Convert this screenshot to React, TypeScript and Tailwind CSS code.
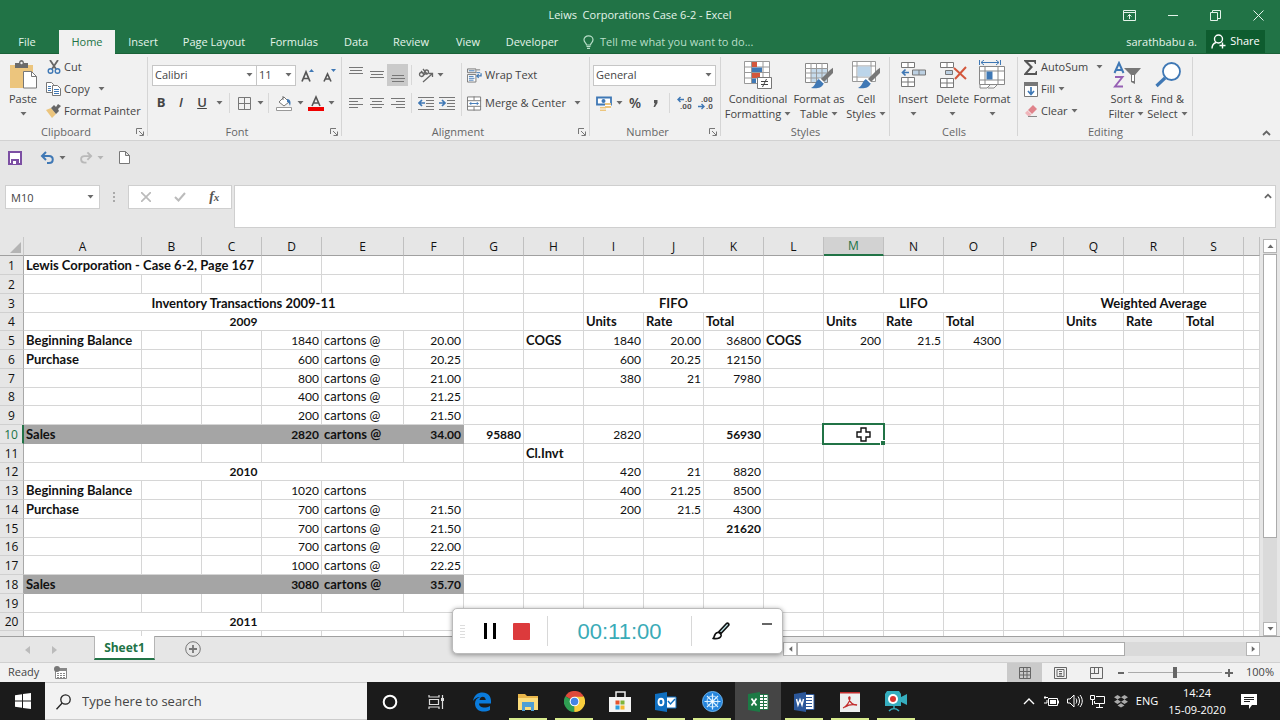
import type { ReactNode } from 'react';

type Cell = { t: string; b?: boolean; a?: 'l' | 'r' | 'c'; span?: number };

const columns = ['A', 'B', 'C', 'D', 'E', 'F', 'G', 'H', 'I', 'J', 'K', 'L', 'M', 'N', 'O', 'P', 'Q', 'R', 'S', ''];

const n = (t: string, b = false): Cell => ({ t, b, a: 'r' });
const h = (t: string): Cell => ({ t, b: true, a: 'l' });
const x = (t: string): Cell => ({ t, a: 'l' });
const m = (t: string, span: number): Cell => ({ t, b: true, a: 'c', span });

const sheet: Record<number, Record<string, Cell>> = {
  1: { A: { t: 'Lewis Corporation - Case 6-2, Page 167', b: true, a: 'l', span: 3 } },
  3: { A: m('Inventory Transactions 2009-11', 6), I: m('FIFO', 3), M: m('LIFO', 3), Q: m('Weighted Average', 3) },
  4: {
    A: m('2009', 6), I: h('Units'), J: h('Rate'), K: h('Total'), M: h('Units'), N: h('Rate'), O: h('Total'),
    Q: h('Units'), R: h('Rate'), S: h('Total'),
  },
  5: {
    A: h('Beginning Balance'), D: n('1840'), E: x('cartons @'), F: n('20.00'), H: h('COGS'), I: n('1840'), J: n('20.00'),
    K: n('36800'), L: h('COGS'), M: n('200'), N: n('21.5'), O: n('4300'),
  },
  6: { A: h('Purchase'), D: n('600'), E: x('cartons @'), F: n('20.25'), I: n('600'), J: n('20.25'), K: n('12150') },
  7: { D: n('800'), E: x('cartons @'), F: n('21.00'), I: n('380'), J: n('21'), K: n('7980') },
  8: { D: n('400'), E: x('cartons @'), F: n('21.25') },
  9: { D: n('200'), E: x('cartons @'), F: n('21.50') },
  10: {
    A: h('Sales'), D: n('2820', true), E: h('cartons @'), F: n('34.00', true), G: n('95880', true), I: n('2820'),
    K: n('56930', true),
  },
  11: { H: h('Cl.Invt') },
  12: { A: m('2010', 6), I: n('420'), J: n('21'), K: n('8820') },
  13: { A: h('Beginning Balance'), D: n('1020'), E: x('cartons'), I: n('400'), J: n('21.25'), K: n('8500') },
  14: { A: h('Purchase'), D: n('700'), E: x('cartons @'), F: n('21.50'), I: n('200'), J: n('21.5'), K: n('4300') },
  15: { D: n('700'), E: x('cartons @'), F: n('21.50'), K: n('21620', true) },
  16: { D: n('700'), E: x('cartons @'), F: n('22.00') },
  17: { D: n('1000'), E: x('cartons @'), F: n('22.25') },
  18: { A: h('Sales'), D: n('3080', true), E: h('cartons @'), F: n('35.70', true) },
  20: { A: m('2011', 6) },
};

const align = { l: 'text-left', r: 'text-right', c: 'text-center' };

function Caret({ light = false }: { light?: boolean }) {
  return (
    <svg width="7" height="4" viewBox="0 0 7 4" className={light ? 'shrink-0 fill-[#b5b5b5]' : 'shrink-0 fill-[#6a6a6a]'}>
      <path d="M.5 0h6l-3 3.6z" />
    </svg>
  );
}

function CaretButton({ label, className = 'w-[9px]' }: { label: string; className?: string }) {
  return (
    <button aria-label={label} className={`flex h-[22px] shrink-0 items-center justify-center ${className}`}>
      <Caret />
    </button>
  );
}

function Tool({ label, className = 'w-[21px]', children }: { label: string; className?: string; children: ReactNode }) {
  return (
    <button aria-label={label} title={label} className={`flex h-[22px] shrink-0 items-center justify-center ${className}`}>
      {children}
    </button>
  );
}

function SmallCommand({ label, icon, caret, gap = 'gap-1' }: { label: string; icon: ReactNode; caret?: boolean; gap?: string }) {
  return (
    <button className="flex h-[22px] items-center gap-[3px] whitespace-nowrap">
      <span className="flex w-[15px] shrink-0 justify-center">{icon}</span>
      <span className={`flex items-center ${gap}`}>
        {label}
        {caret && <Caret />}
      </span>
    </button>
  );
}

function BigCommand({ lines, icon, className }: { lines: [string, string?]; icon: ReactNode; className: string }) {
  return (
    <button className={`flex shrink-0 flex-col items-center pt-[5px] leading-[15px] whitespace-nowrap ${className}`}>
      <span className="flex h-8 items-center">{icon}</span>
      <span>{lines[0]}</span>
      <span className="flex h-[15px] items-center gap-[3px]">
        {lines[1]}
        <Caret />
      </span>
    </button>
  );
}

function Divider({ className }: { className: string }) {
  return <span className={`w-px shrink-0 bg-[#d8d8d8] ${className}`} />;
}

function Group({ name, className, launcher, children }: { name: string; className: string; launcher?: boolean; children: ReactNode }) {
  return (
    <section aria-label={name} className={`relative flex shrink-0 flex-col ${className}`}>
      <div className="flex h-[71px]">{children}</div>
      <div className={`text-center leading-[14px] text-[#666] ${launcher ? 'pr-4' : ''}`}>{name}</div>
      {launcher && (
        <button aria-label={`${name} settings`} className="absolute right-1 bottom-1">
          <svg width="8" height="8" viewBox="0 0 8 8" fill="none" stroke="#777">
            <path d="M.5 6V.5H6M3 3l4 4M7.5 3.500V7.500H3.500" />
          </svg>
        </button>
      )}
      <span className="absolute top-[3px] right-0 h-[79px] w-px bg-[#d5d5d5]" />
    </section>
  );
}

function Lines({ rows, className = '' }: { rows: [number, number, number][]; className?: string }) {
  return (
    <svg width="14" height="18" viewBox="0 0 14 18" stroke="#777" className={className}>
      {rows.map(([y, x1, x2]) => (
        <path key={y} d={`M${x1} ${y}.5H${x2}`} />
      ))}
    </svg>
  );
}

const PasteIcon = (
  <svg width="28" height="30" viewBox="0 0 28 30">
    <path d="M1 5h23v23H1z" fill="#ecc57d" />
    <path d="M6 3h4c0-4 5-4 5 0h4v5H6z" fill="#6b6b6b" />
    <circle cx="12.500" cy="3" r="1.200" fill="#f1f1f1" />
    <path d="M14.500 11.500h8l5 5V28h-13z" fill="#fff" stroke="#777" />
    <path d="M22.500 11.500v5h5" fill="none" stroke="#777" />
  </svg>
);
const CutIcon = (
  <svg width="14" height="14" viewBox="0 0 14 14" fill="none">
    <path d="M3 0l6 9M11 0L5 9" stroke="#666" strokeWidth="1.800" />
    <circle cx="3.500" cy="11" r="2.300" stroke="#3f78b5" strokeWidth="1.400" />
    <circle cx="10.500" cy="11" r="2.300" stroke="#3f78b5" strokeWidth="1.400" />
  </svg>
);
const CopyIcon = (
  <svg width="15" height="14" viewBox="0 0 15 14" fill="#fff" stroke="#777">
    <path d="M.5.5h5l2 2v8h-7z" />
    <path d="M2 4.500h3M2 6.500h3M2 8.500h3" stroke="#3f78b5" />
    <path d="M6.500 3.500h5l3 3v7h-8z" />
    <path d="M8 7.500h5M8 9.500h5M8 11.500h5" stroke="#3f78b5" />
  </svg>
);
const PainterIcon = (
  <svg width="15" height="14" viewBox="0 0 15 14">
    <path d="M0 6l5-2 5 6-4 4z" fill="#ecc57d" />
    <path d="M5 4l3-3 2 2 2-3 3 2-3 3 1 2-3 3z" fill="#666" />
  </svg>
);
const GrowA = ({ up }: { up: boolean }) => (
  <svg width="13" height="15" viewBox="0 0 13 15">
    {up ? (
      <path d="M1 13.500L5 4l4 9.500M2.500 10.500h5" fill="none" stroke="#555" strokeWidth="1.700" />
    ) : (
      <path d="M1 13.500L4.500 6 8 13.500M2.500 11h4" fill="none" stroke="#555" strokeWidth="1.600" />
    )}
    <path d={up ? 'M8 4h5l-2.500-3z' : 'M8 1h5l-2.500 3z'} fill="#3f78b5" />
  </svg>
);
const BordersIcon = (
  <svg width="13" height="13" viewBox="0 0 13 13" fill="none" stroke="#777">
    <path d="M.5.5h12v12H.5zM6.500 0v13M0 6.500h13" />
  </svg>
);
const BucketIcon = (
  <svg width="16" height="16" viewBox="0 0 16 16">
    <path d="M3 7l5-5 5 5-5 4z" fill="#fff" stroke="#777" />
    <path d="M7 5V1" stroke="#777" />
    <path d="M11 4c4 0 4 4 3 7-1-2-1-4-3-4z" fill="#3f78b5" />
    <path d="M.5 12.500h15v3H.5z" fill="#fff" stroke="#999" />
  </svg>
);
const FontColorIcon = (
  <svg width="16" height="16" viewBox="0 0 16 16">
    <path d="M4 11L8 2l4 9M5.500 8h5" fill="none" stroke="#555" strokeWidth="1.600" />
    <path d="M0 12h16v4H0z" fill="#f00000" />
  </svg>
);
const OrientIcon = (
  <svg width="16" height="15" viewBox="0 0 16 15" fill="none" stroke="#666" strokeWidth="1.300">
    <circle cx="3.500" cy="6.500" r="2" />
    <path d="M3 3l4 4M5 1l4 5" />
    <circle cx="8.500" cy="4" r="2" />
    <path d="M5 14l9-8M11 5.500h3.500V9" />
  </svg>
);
const IndentIcon = ({ out }: { out: boolean }) => (
  <svg width="16" height="13" viewBox="0 0 16 13" fill="none" stroke="#777">
    <path d="M0 .5h16M8 3.500h8M8 6.500h8M8 9.500h8M0 12.500h16" />
    <path d={out ? 'M7 6H1M4 3L1 6l3 3' : 'M0 6h6M3 3l3 3-3 3'} stroke="#3f78b5" strokeWidth="1.700" />
  </svg>
);
const WrapIcon = (
  <svg width="16" height="16" viewBox="0 0 16 16" fill="none" stroke="#777">
    <path d="M.5 1.500h9v4h-9zM10 2.500h4" />
    <path d="M2 3.500h6M10 5.500h4" stroke="#3f78b5" />
    <path d="M.5 7.500h9v8h-9z" fill="#fff" />
    <path d="M2 9.500h5M2 11.500h6M2 13.500h5" stroke="#3f78b5" />
    <path d="M15 6v3h-4M12.500 7L10.500 9l2 2" stroke="#3f78b5" strokeWidth="1.300" />
  </svg>
);
const MergeIcon = (
  <svg width="16" height="15" viewBox="0 0 16 15" fill="#fff" stroke="#777">
    <path d="M.5.5h14v14H.5zM7.500 0v4M7.500 11v4M0 4.500h15M0 10.500h15" />
    <path d="M3 7.500h9M4.500 6L3 7.500 4.500 9M10.500 6L12 7.500 10.500 9" fill="none" stroke="#3f78b5" />
  </svg>
);
const MoneyIcon = (
  <svg width="16" height="15" viewBox="0 0 16 15">
    <path d="M1 1.500h14v7H1z" fill="#fff" stroke="#3f78b5" strokeWidth="1.800" />
    <circle cx="7.500" cy="5" r="2" fill="#3f78b5" />
    <path d="M9 7h6v5H9zM4 11h6v4H4z" fill="#ecc57d" />
    <path d="M9 9.500h6M4 13h11" stroke="#fff" />
  </svg>
);
const DecimalIcon = ({ more }: { more: boolean }) => (
  <svg width="15" height="14" viewBox="0 0 15 14" fontFamily="Roboto, sans-serif" fontSize="8" fontWeight="700" fill="#555">
    <text x={more ? 8 : 3} y="6">{more ? '.0' : '.00'}</text>
    <text x={more ? 3 : 8} y="13">{more ? '.00' : '.0'}</text>
    <path d={more ? 'M7 3.500H1M3.500 1L1 3.500 3.500 6' : 'M0 10.500h6M3.500 8L6 10.500 3.500 13'} fill="none" stroke="#3f78b5" strokeWidth="1.400" />
  </svg>
);
const ConditionalIcon = (
  <svg width="28" height="28" viewBox="0 0 28 28">
    <path d="M.5.5h25v22H.5zM7.500 0v23M19 0v23M0 6h26M0 11.500h26M0 17h26" fill="#fff" stroke="#999" />
    <path d="M8 1h5v5H8zM8 12h8v5H8z" fill="#d3573c" />
    <path d="M8 6.500h10V11H8zM8 17.500h4V22H8z" fill="#3f78b5" />
    <path d="M13.500 16.500h14v11h-14z" fill="#fff" stroke="#777" />
    <path d="M17 20.500h7M17 23.500h7M22.500 18l-4 8" stroke="#444" fill="none" />
  </svg>
);
const Brush = (
  <>
    <path d="M15 19l10-10 4-3-1 6-9 9z" fill="#777" />
    <path d="M14 18l5 4c-2 5-7 6-13 5 5-2 4-7 8-9z" fill="#3f78b5" />
    <path d="M14.500 17.500l4.500 4.500" stroke="#fff" strokeWidth="1.500" />
  </>
);
const TableIcon = (
  <svg width="28" height="28" viewBox="0 0 28 28">
    <path d="M.5 2.500h22v19H.5z" fill="#fff" stroke="#888" />
    <path d="M6 7h16v14H6z" fill="#c6dbec" />
    <path d="M6 2v20M11.500 2v20M17 2v20M0 7.500h23M0 12h23M0 17h23" stroke="#999" fill="none" />
    {Brush}
  </svg>
);
const StylesIcon = (
  <svg width="28" height="28" viewBox="0 0 28 28">
    <path d="M.5.5h23v20H.5zM5 0v21M19 0v21M0 5h24M0 16h24" fill="#fff" stroke="#999" />
    <path d="M5.500 5.500h13v10h-13z" fill="#bcd5ea" />
    {Brush}
  </svg>
);
const InsertIcon = (
  <svg width="26" height="28" viewBox="0 0 26 28" fill="#fff" stroke="#777">
    <path d="M1.500 1.500h13v5h-13zM8 1.500v5M1.500 16.500h13v9h-13zM8 16.500v9M1.500 21h13" />
    <path d="M12.500 9h13v5h-13z" fill="#bcd0e2" />
    <path d="M19 9v5" />
    <path d="M9 11.500H3M5.500 8.500l-3 3 3 3" fill="none" stroke="#3f78b5" strokeWidth="1.700" />
  </svg>
);
const DeleteIcon = (
  <svg width="28" height="28" viewBox="0 0 28 28" fill="#fff" stroke="#777">
    <path d="M1.500 1.500h13v5h-13zM8 1.500v5M1.500 17.500h13v9h-13zM8 17.500v9M1.500 22h13" />
    <path d="M6.500 9.500h7v4h-7z" fill="#bcd0e2" />
    <path d="M15 7l12 11M27 6L16 18" fill="none" stroke="#d3573c" strokeWidth="2" />
  </svg>
);
const FormatIcon = (
  <svg width="28" height="30" viewBox="0 0 28 30" fill="#fff" stroke="#888">
    <path d="M1.500 6.500h25v18h-25zM7 6v19M20 6v19M1 11h26M1 20h26" />
    <path d="M2 25v3h7l3-3M10 28h6l3-3" />
    <path d="M8.500 11.500h6v8h-6z" fill="#3f78b5" stroke="none" />
    <path d="M1.500 0v5M22.500 0v5M3 2.500h18M6 0L3 2.500 6 5M18 0l3 2.500L18 5" fill="none" stroke="#3f78b5" />
  </svg>
);
const SigmaIcon = (
  <svg width="15" height="15" viewBox="0 0 15 15">
    <path d="M1 0h12v4h-1l-1-2H5l5 5-5.500 6H12l1-2h1v4H1v-1l6-7-6-6z" fill="#555" />
  </svg>
);
const FillIcon = (
  <svg width="14" height="15" viewBox="0 0 14 15">
    <path d="M.5.5h13v14H.5z" fill="#fff" stroke="#777" />
    <path d="M0 0h14v4H0z" fill="#777" />
    <path d="M7 5v7M4 9l3 3.500L10 9" fill="none" stroke="#3f78b5" strokeWidth="1.700" />
  </svg>
);
const ClearIcon = (
  <svg width="14" height="13" viewBox="0 0 14 13">
    <path d="M4 5l5-5 4 4-5 5z" fill="#e0838b" />
    <path d="M3.500 5.500L1 8l3 3h2l1.500-1.500z" fill="#f0b5ba" />
    <path d="M4 11.500h9" stroke="#888" />
  </svg>
);
const SortIcon = (
  <svg width="28" height="28" viewBox="0 0 28 28" fill="none">
    <path d="M1.500 12L6 2l4.500 10M3 9h6" stroke="#3f78b5" strokeWidth="2" />
    <path d="M2 16h7.500L2 25.500h8" stroke="#9660b4" strokeWidth="1.900" />
    <path d="M11 7h17l-6 7v9l-4-2v-7z" fill="#777" />
    <path d="M19 14h2v6h-2z" fill="#fff" />
  </svg>
);
const FindIcon = (
  <svg width="28" height="28" viewBox="0 0 28 28" fill="none" stroke="#3f78b5">
    <circle cx="17.500" cy="10.500" r="8.500" fill="#fff" strokeWidth="1.800" />
    <path d="M11 17l-8.500 8" strokeWidth="3.200" />
  </svg>
);

const tabs: [string, string][] = [
  ['Insert', 'w-14'],
  ['Page Layout', 'w-[86px]'],
  ['Formulas', 'w-[74px]'],
  ['Data', 'w-[50px]'],
  ['Review', 'w-[60px]'],
  ['View', 'w-[54px]'],
  ['Developer', 'w-[74px]'],
];

function TitleBar() {
  return (
    <header className="shrink-0 bg-[#217346] text-[#e4f3ea]">
      <div className="relative flex h-[30px] items-center justify-end">
        <h1 className="absolute inset-x-0 pt-px text-center whitespace-pre">Leiws  Corporations Case 6-2 - Excel</h1>
        <div className="relative flex">
          <button aria-label="Ribbon display options" className="flex w-[43px] justify-center">
            <svg width="13" height="11" viewBox="0 0 13 11" fill="none" stroke="currentColor">
              <path d="M.5.5h12v10H.5zM0 2.500h13M6.500 9V4.500M4.500 6.500l2-2 2 2" />
            </svg>
          </button>
          <button aria-label="Minimize" className="flex w-[43px] items-center justify-center">
            <span className="h-px w-[10px] bg-current" />
          </button>
          <button aria-label="Restore" className="flex w-[43px] justify-center">
            <svg width="11" height="11" viewBox="0 0 11 11" fill="none" stroke="currentColor">
              <path d="M.5 2.500h7v8h-7zM2.500 2V.5h8v8H8" />
            </svg>
          </button>
          <button aria-label="Close" className="flex w-[43px] justify-center">
            <svg width="11" height="11" viewBox="0 0 11 11" fill="none" stroke="currentColor">
              <path d="M.5.5l10 10M10.500.5l-10 10" />
            </svg>
          </button>
        </div>
      </div>
      <nav className="flex h-6 border-b border-[#1a6238]">
        <button className="mr-[5px] w-[54px] pt-[2px]">File</button>
        <button className="-mb-px w-14 bg-[#f1f1f1] text-[#217346]">Home</button>
        {tabs.map(([t, w]) => (
          <button key={t} className={`pt-px ${w}`}>
            {t}
          </button>
        ))}
        <button className="ml-[14px] flex items-center gap-[6px] pt-px whitespace-nowrap text-[#b9dfc9]">
          <svg width="11" height="14" viewBox="0 0 11 14" fill="none" stroke="currentColor" strokeWidth="1.200">
            <path d="M3.500 10C3.500 8 1 7.500 1 4.700 1 2.500 3 .8 5.500.8S10 2.500 10 4.700C10 7.500 7.500 8 7.500 10zM3.500 11.500h4M4 13.300h3" />
          </svg>
          Tell me what you want to do...
        </button>
        <span className="mr-[9px] ml-auto self-center pt-px">sarathbabu a.</span>
        <button className="mr-[15px] flex w-[59px] items-center justify-center gap-1 bg-[#0e5c2f] text-white">
          <svg width="15" height="15" viewBox="0 0 15 15" fill="none" stroke="currentColor" strokeWidth="1.400">
            <circle cx="7.500" cy="5" r="4" />
            <path d="M5 8.500C2.500 9.500 1 12 1 14.500M11.500 8.500v6M8.500 11.500h6" />
          </svg>
          Share
        </button>
      </nav>
    </header>
  );
}

function Picker({ label, value, className }: { label: string; value: string; className: string }) {
  return (
    <span className={`relative flex h-[21px] shrink-0 items-center ${className}`}>
      <select aria-label={label} className="h-full w-full appearance-none border border-[#c6c6c6] bg-white pl-[2px]">
        <option>{value}</option>
      </select>
      <span className="pointer-events-none absolute right-1">
        <Caret />
      </span>
    </span>
  );
}

function Ribbon() {
  return (
    <div className="flex h-[87px] shrink-0 border-b border-[#d2d2d2] bg-[#f1f1f1]">
      <Group name="Clipboard" className="w-[148px]" launcher>
        <BigCommand lines={['Paste']} icon={PasteIcon} className="w-[46px]" />
        <div className="flex flex-col pt-[2px]">
          <SmallCommand label="Cut" icon={CutIcon} />
          <SmallCommand label="Copy" icon={CopyIcon} caret gap="gap-2" />
          <SmallCommand label="Format Painter" icon={PainterIcon} />
        </div>
      </Group>
      <Group name="Font" className="w-[194px]" launcher>
        <div className="flex flex-col gap-[6px] pt-[10px] pl-[3px]">
          <div className="flex items-center pl-px">
            <Picker label="Font" value="Calibri" className="w-[105px]" />
            <Picker label="Font size" value="11" className="-ml-px w-[40px]" />
            <Tool label="Increase font size" className="w-[22px]"><GrowA up /></Tool>
            <Tool label="Decrease font size" className="w-[22px]"><GrowA up={false} /></Tool>
          </div>
          <div className="flex items-center text-[13px] text-[#444]">
            <Tool label="Bold" className="w-5"><b>B</b></Tool>
            <Tool label="Italic" className="w-5"><i className="font-semibold">I</i></Tool>
            <Tool label="Underline" className="w-[22px]"><u className="font-semibold">U</u></Tool>
            <CaretButton label="Underline styles" className="w-3" />
            <Divider className="mx-1 h-5" />
            <Tool label="Borders" className="w-5">{BordersIcon}</Tool>
            <CaretButton label="Border styles" className="w-3" />
            <Divider className="mr-[3px] ml-[2px] h-5" />
            <Tool label="Fill color" className="w-6">{BucketIcon}</Tool>
            <CaretButton label="Fill colors" />
            <Tool label="Font color" className="w-[22px]">{FontColorIcon}</Tool>
            <CaretButton label="Font colors" />
          </div>
        </div>
      </Group>
      <Group name="Alignment" className="w-[248px]" launcher>
        <div className="flex flex-col gap-[6px] pt-[10px] pl-[3px]">
          <div className="flex items-center">
            <Tool label="Top align"><Lines rows={[[1, 0, 14], [4, 1, 13], [7, 0, 14]]} /></Tool>
            <Tool label="Middle align"><Lines rows={[[5, 0, 14], [8, 1, 13], [11, 0, 14]]} /></Tool>
            <Tool label="Bottom align" className="w-[21px] bg-[#cacaca]"><Lines rows={[[9, 1, 13], [12, 0, 14], [15, 1, 13]]} /></Tool>
            <Divider className="mx-[3px] h-5" />
            <Tool label="Orientation">{OrientIcon}</Tool>
            <CaretButton label="Orientation options" />
          </div>
          <div className="flex items-center">
            <Tool label="Align left"><Lines rows={[[4, 0, 14], [7, 0, 9], [10, 0, 14], [13, 0, 9]]} /></Tool>
            <Tool label="Center"><Lines rows={[[4, 0, 14], [7, 2, 12], [10, 0, 14], [13, 2, 12]]} /></Tool>
            <Tool label="Align right"><Lines rows={[[4, 0, 14], [7, 5, 14], [10, 0, 14], [13, 5, 14]]} /></Tool>
            <Divider className="mx-[3px] h-5" />
            <Tool label="Decrease indent"><IndentIcon out /></Tool>
            <Tool label="Increase indent"><IndentIcon out={false} /></Tool>
          </div>
        </div>
        <Divider className="mx-1 mt-[9px] h-[53px]" />
        <div className="flex flex-col gap-[6px] pt-[10px] pl-px">
          <SmallCommand label="Wrap Text" icon={WrapIcon} />
          <SmallCommand label="Merge &amp; Center" icon={MergeIcon} caret gap="gap-2" />
        </div>
      </Group>
      <Group name="Number" className="w-[131px]" launcher>
        <div className="flex flex-col gap-[6px] pt-[10px] pl-[3px]">
          <div className="flex h-[22px] items-center">
            <Picker label="Number format" value="General" className="w-[123px]" />
          </div>
          <div className="flex items-center text-[#444]">
            <Tool label="Accounting format" className="w-[22px]">{MoneyIcon}</Tool>
            <CaretButton label="Currencies" />
            <Tool label="Percent style" className="w-[22px]"><span className="text-sm font-semibold">%</span></Tool>
            <Tool label="Comma style" className="w-[19px]">
              <svg width="5" height="7" viewBox="0 0 5 7" fill="#555"><path d="M1 0h3.500v3L2 7H.5L2 3.300H1z" /></svg>
            </Tool>
            <Divider className="mx-1 h-5" />
            <Tool label="Increase decimal"><DecimalIcon more /></Tool>
            <Tool label="Decrease decimal"><DecimalIcon more={false} /></Tool>
          </div>
        </div>
      </Group>
      <Group name="Styles" className="w-[169px]">
        <BigCommand lines={['Conditional', 'Formatting']} icon={ConditionalIcon} className="w-[74px]" />
        <BigCommand lines={['Format as', 'Table']} icon={TableIcon} className="w-12" />
        <BigCommand lines={['Cell', 'Styles']} icon={StylesIcon} className="w-[46px]" />
      </Group>
      <Group name="Cells" className="w-32">
        <BigCommand lines={['Insert']} icon={InsertIcon} className="ml-[3px] w-10" />
        <BigCommand lines={['Delete']} icon={DeleteIcon} className="w-[39px]" />
        <BigCommand lines={['Format']} icon={FormatIcon} className="w-10" />
      </Group>
      <Group name="Editing" className="w-[175px]">
        <div className="flex w-[88px] flex-col pt-[2px] pl-[5px]">
          <SmallCommand label="AutoSum" icon={SigmaIcon} caret gap="gap-2" />
          <SmallCommand label="Fill" icon={FillIcon} caret gap="gap-[3px]" />
          <SmallCommand label="Clear" icon={ClearIcon} caret gap="gap-[3px]" />
        </div>
        <BigCommand lines={['Sort &', 'Filter']} icon={SortIcon} className="w-[41px]" />
        <BigCommand lines={['Find &', 'Select']} icon={FindIcon} className="w-[41px]" />
      </Group>
      <button aria-label="Collapse the ribbon" className="mr-[9px] mb-1 ml-auto self-end">
        <svg width="9" height="6" viewBox="0 0 9 6" fill="none" stroke="#666" strokeWidth="1.800"><path d="M1 5l3.500-3.500L8 5" /></svg>
      </button>
    </div>
  );
}

function QuickAccess() {
  return (
    <div className="flex h-[33px] shrink-0 items-center pl-2">
      <button aria-label="Save">
        <svg width="14" height="14" viewBox="0 0 14 14">
          <path d="M1 1h12v12H1z" fill="#fff" stroke="#7c4fa3" strokeWidth="2" />
          <path d="M3 8h8v5H3z" fill="#7c4fa3" />
          <path d="M5 10h3v3H5z" fill="#fff" />
          <path d="M3 1.500h8" stroke="#7c4fa3" />
        </svg>
      </button>
      <button aria-label="Undo" className="ml-[18px]">
        <svg width="15" height="13" viewBox="0 0 15 13" fill="none" stroke="#3f78b5" strokeWidth="2">
          <path d="M6 1L2 5l4 4M2 5h7c5 0 5 7 0 7H7" />
        </svg>
      </button>
      <button aria-label="Undo history" className="ml-1"><Caret /></button>
      <button aria-label="Redo" className="ml-[13px]">
        <svg width="14" height="13" viewBox="0 0 15 13" fill="none" stroke="#b9b9b9" strokeWidth="2">
          <path d="M9 1l4 4-4 4M13 5H6c-5 0-5 7 0 7h2" />
        </svg>
      </button>
      <button aria-label="Redo history" className="ml-1"><Caret light /></button>
      <button aria-label="New" className="ml-[15px]">
        <svg width="11" height="13" viewBox="0 0 11 13" fill="#fff" stroke="#777"><path d="M.5.5h6l4 4v8H.5zM6.500.5v4h4" /></svg>
      </button>
    </div>
  );
}

function FormulaBar() {
  return (
    <div className="flex shrink-0 items-start pt-[11px] pr-1 pb-[9px] pl-[5px]">
      <span className="relative flex h-6 w-[95px] items-center">
        <input aria-label="Name box" defaultValue="M10" className="h-full w-full border border-[#cfcfcf] bg-white pl-[5px] outline-none" />
        <button aria-label="Named ranges" className="absolute right-[6px]"><Caret /></button>
      </span>
      <span className="mx-[13px] flex h-6 w-[2px] flex-col justify-center gap-[2px]">
        <i className="h-[2px] bg-[#aaa]" />
        <i className="h-[2px] bg-[#aaa]" />
        <i className="h-[2px] bg-[#aaa]" />
      </span>
      <span className="flex h-6 w-[104px] items-center justify-around border border-[#cfcfcf] bg-white">
        <button aria-label="Cancel">
          <svg width="10" height="10" viewBox="0 0 10 10" stroke="#bbb" strokeWidth="1.700"><path d="M0 0l10 10M10 0L0 10" /></svg>
        </button>
        <button aria-label="Enter">
          <svg width="12" height="10" viewBox="0 0 12 10" fill="none" stroke="#bbb" strokeWidth="2"><path d="M1 5l3.500 3.500L11 1" /></svg>
        </button>
        <button aria-label="Insert function" className="font-['Liberation_Serif',serif] text-sm leading-none font-bold text-[#555] italic">
          f<span className="text-[11px]">x</span>
        </button>
      </span>
      <span className="relative ml-[2px] flex flex-1">
        <textarea aria-label="Formula bar" className="h-[43px] w-full resize-none border border-[#cfcfcf] bg-white outline-none" />
        <button aria-label="Collapse formula bar" className="absolute top-2 right-1">
          <svg width="8" height="6" viewBox="0 0 9 6" fill="none" stroke="#666" strokeWidth="2"><path d="M1 5l3.500-3.500L8 5" /></svg>
        </button>
      </span>
    </div>
  );
}

function GridRow({ row }: { row: number }) {
  const cells: ReactNode[] = [];
  const banded = row === 10 || row === 18;
  const data = sheet[row] ?? {};
  for (let i = 0; i < columns.length; i++) {
    const c = data[columns[i]];
    const grey = banded && i < 6;
    const span = c?.span ?? 1;
    const active = row === 10 && columns[i] === 'M';
    const size = c && /[a-z]/i.test(c.t) ? 'text-[13px]' : 'text-[12px]';
    cells.push(
      <td
        key={i}
        colSpan={span}
        className={`border-r border-b px-[2px] whitespace-nowrap ${size} ${grey ? 'border-[#a5a5a5] bg-[#a5a5a5]' : 'border-[#d6d6d6]'} ${c?.b ? 'font-bold' : ''} ${align[c?.a ?? 'l']} ${active ? 'relative' : ''}`}
      >
        {c?.t}
        {active && (
          <>
            <span className="absolute -inset-[2px] border-2 border-[#217346]" />
            <span className="absolute -right-[2px] -bottom-[2px] size-[5px] border-t border-l border-white bg-[#217346]" />
            <svg width="15" height="15" viewBox="0 0 15 15" className="absolute top-[2px] right-3" fill="#fff" stroke="#111" strokeWidth="1.400">
              <path d="M5 1h5v4h4v5h-4v4H5v-4H1V5h4z" />
            </svg>
          </>
        )}
      </td>,
    );
    i += span - 1;
  }
  return (
    <tr className={row % 4 === 0 ? 'h-[18px]' : 'h-[19px]'}>
      <th
        scope="row"
        className={`border-b border-b-[#d0d0d0] bg-[#e6e6e6] font-["Open_Sans",sans-serif] font-normal ${row === 10 ? 'border-r-2 border-r-[#217346] text-[#217346]' : 'border-r border-r-[#a8a8a8]'}`}
      >
        {row <= 20 && row}
      </th>
      {cells}
    </tr>
  );
}

function Sheet() {
  return (
    <main className="flex min-h-0 flex-1">
      <div className="min-w-0 flex-1 overflow-hidden">
        <table className="w-full table-fixed border-separate border-spacing-0 bg-white font-['Lato',sans-serif] text-[12px] leading-[17px] text-[#111]">
          <colgroup>
            <col className="w-6" />
            <col className="w-[118px]" />
            <col className="w-[60px]" />
            <col className="w-[60px]" />
            <col className="w-[60px]" />
            <col className="w-[82px]" />
            {columns.slice(5, 19).map((c) => (
              <col key={c} className="w-[60px]" />
            ))}
            <col />
          </colgroup>
          <thead className="bg-[#e6e6e6] font-['Open_Sans',sans-serif]">
            <tr className="h-[19px]">
              <th aria-label="Select all" className="border-r border-b border-r-[#c8c8c8] border-b-[#a0a0a0]">
                <svg width="11" height="11" viewBox="0 0 11 11" className="mt-[2px] mr-[2px] ml-auto"><path d="M11 0v11H0z" fill="#b4b4b4" /></svg>
              </th>
              {columns.map((c, i) => (
                <th
                  key={i}
                  scope="col"
                  className={`border-r font-normal ${c === 'M' ? 'border-b-2 border-r-[#c0c0c0] border-b-[#217346] bg-[#d2d2d2] text-[#217346]' : 'border-b border-r-[#c0c0c0] border-b-[#a0a0a0]'}`}
                >
                  {c}
                </th>
              ))}
            </tr>
          </thead>
          <tbody>
            {Array.from({ length: 21 }, (_, i) => (
              <GridRow key={i} row={i + 1} />
            ))}
          </tbody>
        </table>
      </div>
      <div className="mt-[2px] mr-[3px] ml-[3px] flex w-[14px] flex-col bg-[#dadada]">
        <button aria-label="Scroll up" className="flex h-[14px] items-center justify-center border border-[#b5b5b5] bg-white">
          <span className="rotate-180"><Caret /></span>
        </button>
        <div className="mt-px h-[284px] border border-[#ababab] bg-white" />
        <button aria-label="Scroll down" className="mt-auto flex h-[14px] items-center justify-center border border-[#b5b5b5] bg-white">
          <Caret />
        </button>
      </div>
    </main>
  );
}

function SheetTabs() {
  return (
    <div className="flex h-[26px] shrink-0 items-start border-t border-[#a0a0a0]">
      <div className="flex h-[25px] w-[94px] items-center gap-[22px] pl-[25px] text-[#bbb]">
        <button aria-label="Previous sheet"><svg width="5" height="8" viewBox="0 0 5 8" fill="currentColor"><path d="M5 0v8L0 4z" /></svg></button>
        <button aria-label="Next sheet"><svg width="5" height="8" viewBox="0 0 5 8" fill="currentColor"><path d="M0 0v8l5-4z" /></svg></button>
      </div>
      <button className="-mt-px h-[24px] w-[61px] border-x border-b-2 border-x-[#b5b5b5] border-b-[#217346] bg-white pt-[2px] text-[12px] leading-[18px] font-bold text-[#217346]">Sheet1</button>
      <button aria-label="New sheet" className="mt-1 ml-[30px]">
        <svg width="16" height="16" viewBox="0 0 16 16" fill="none" stroke="#777"><circle cx="8" cy="8" r="7.300" /><path d="M4 8h8M8 4v8" strokeWidth="1.800" /></svg>
      </button>
      <div className="mt-[5px] mr-5 ml-auto flex h-[14px] w-[477px] bg-[#dadada]">
        <button aria-label="Scroll left" className="flex w-[14px] items-center justify-center border border-[#b5b5b5] bg-white">
          <span className="rotate-90"><Caret /></span>
        </button>
        <div className="w-[328px] border border-[#ababab] bg-white" />
        <button aria-label="Scroll right" className="ml-auto flex w-[14px] items-center justify-center border border-[#b5b5b5] bg-white">
          <span className="-rotate-90"><Caret /></span>
        </button>
      </div>
    </div>
  );
}

function StatusBar() {
  return (
    <footer className="flex h-5 shrink-0 items-center border-t border-[#d0d0d0] bg-[#f1f1f1] pl-2 text-[11px]">
      <span>Ready</span>
      <button aria-label="Record macro" className="ml-[15px]">
        <svg width="13" height="13" viewBox="0 0 13 13">
          <path d="M1.500 3.500h11v9h-11z" fill="#fff" stroke="#888" />
          <path d="M5 2h8v3H5z" fill="#888" />
          <path d="M3 7.500h8M3 9.500h8M3 11.500h8" stroke="#888" strokeDasharray="2 1" />
          <circle cx="3" cy="3" r="3" fill="#777" />
        </svg>
      </button>
      <div className="ml-auto flex h-full items-center">
        <button aria-label="Normal view" className="flex h-full w-[35px] items-center justify-center bg-[#cacaca]">
          <svg width="12" height="12" viewBox="0 0 12 12" fill="none" stroke="#666"><path d="M.5.5h11v11H.5zM4.500 0v12M8 0v12M0 4.500h12M0 8h12" /></svg>
        </button>
        <button aria-label="Page layout view" className="flex w-9 justify-center">
          <svg width="13" height="12" viewBox="0 0 13 12" fill="none" stroke="#666"><path d="M.5.5h12v11H.5zM3 2.500h7v7H3zM5 4.500h3M5 6.500h3M5 8h3" /></svg>
        </button>
        <button aria-label="Page break view" className="flex w-9 justify-center">
          <svg width="13" height="12" viewBox="0 0 13 12" fill="none" stroke="#666"><path d="M.5.5h12v11H.5zM4.500 0v7M8.500 0v7M4 6.500H1M9 6.500H4" /></svg>
        </button>
        <button aria-label="Zoom out" className="ml-[2px] flex w-[10px] justify-center"><span className="h-[2px] w-[6px] bg-[#666]" /></button>
        <input
          type="range"
          aria-label="Zoom"
          defaultValue={50}
          className="mx-[2px] h-[11px] w-[94px] appearance-none bg-transparent [&::-webkit-slider-runnable-track]:h-px [&::-webkit-slider-runnable-track]:bg-[#aaa] [&::-webkit-slider-thumb]:-mt-[5px] [&::-webkit-slider-thumb]:h-[11px] [&::-webkit-slider-thumb]:w-1 [&::-webkit-slider-thumb]:appearance-none [&::-webkit-slider-thumb]:bg-[#666]"
        />
        <button aria-label="Zoom in" className="flex w-[10px] justify-center">
          <svg width="8" height="8" viewBox="0 0 8 8" stroke="#666" strokeWidth="2"><path d="M0 4h8M4 0v8" /></svg>
        </button>
        <button className="w-[46px] pr-[6px] text-right text-[11px]">100%</button>
      </div>
    </footer>
  );
}

const apps: { name: string; open?: boolean; active?: boolean; icon: ReactNode }[] = [
  {
    name: 'Cortana',
    icon: <svg width="16" height="16" viewBox="0 0 16 16" fill="none" stroke="#fff" strokeWidth="2"><circle cx="8" cy="8" r="6.300" /></svg>,
  },
  {
    name: 'Task View',
    icon: (
      <svg width="17" height="16" viewBox="0 0 17 16" fill="none" stroke="#ddd" strokeWidth="1.200">
        <path d="M1 1v2h10V1M1 15v-2h10v2M1.500 5.500h9v5h-9zM14.500 1v3M14.500 7v8" />
        <path d="M13 4h3v3h-3z" fill="#ddd" stroke="none" />
      </svg>
    ),
  },
  {
    name: 'Edge',
    icon: (
      <svg width="20" height="20" viewBox="0 0 20 20">
        <path d="M1 9C2 3 6 .5 10.500.5c5.500 0 8.500 4 8.500 8.500v2.500H7c0 4 6 5.500 11 2.500v4c-7 3.500-15 1-15-6.500C3 8 5 6 8 5 5 5 2.500 7 1 9zm6.500-1h6.300C13.500 3.500 8 3.500 7.500 8z" fill="#0a7bdc" />
      </svg>
    ),
  },
  {
    name: 'File Explorer',
    open: true,
    icon: (
      <svg width="20" height="18" viewBox="0 0 20 18">
        <path d="M0 1h7l2 2h11v14H0z" fill="#e9b64a" />
        <path d="M0 5h20v12H0z" fill="#fbdc7c" />
        <path d="M4 9h12v9h-3v-4H7v4H4z" fill="#4f9fd4" />
      </svg>
    ),
  },
  {
    name: 'Chrome',
    open: true,
    icon: (
      <svg width="21" height="21" viewBox="0 0 20 20">
        <path d="M10 10L1.300 5A10 10 0 0 1 18.700 5z" fill="#df4a3b" />
        <path d="M10 10L1.300 5A10 10 0 0 0 10 20z" fill="#2f9e52" />
        <path d="M10 10l8.700-5A10 10 0 0 1 10 20z" fill="#f8cd3c" />
        <path d="M10 5.500h9L14 13l-4 7z" fill="#f8cd3c" />
        <circle cx="10" cy="10" r="4.600" fill="#fff" />
        <circle cx="10" cy="10" r="3.600" fill="#4484e4" />
      </svg>
    ),
  },
  {
    name: 'Store',
    icon: (
      <svg width="22" height="22" viewBox="0 0 22 22">
        <path d="M7 6V1h9v5" fill="none" stroke="#eee" strokeWidth="1.500" />
        <path d="M0 6h22v15H0z" fill="#f4f4f4" />
        <path d="M6.500 9.500h4v4h-4z" fill="#e6532c" /><path d="M11.500 9.500h4v4h-4z" fill="#7fb53a" />
        <path d="M6.500 14.500h4v4h-4z" fill="#2d9fe0" /><path d="M11.500 14.500h4v4h-4z" fill="#f5b92e" />
      </svg>
    ),
  },
  {
    name: 'Outlook',
    open: true,
    icon: (
      <svg width="22" height="20" viewBox="0 0 22 20">
        <path d="M11 5h10v11H11z" fill="#fff" stroke="#0f6fc0" />
        <path d="M13 9l2.500 3L20 7" fill="none" stroke="#0f6fc0" strokeWidth="1.400" />
        <path d="M0 2l12-2v20L0 18z" fill="#0f6fc0" />
        <ellipse cx="6" cy="10" rx="2.500" ry="3.300" fill="none" stroke="#fff" strokeWidth="1.900" />
      </svg>
    ),
  },
  {
    name: 'Helm',
    open: true,
    icon: (
      <svg width="21" height="21" viewBox="0 0 21 21" fill="none" stroke="#d9efff">
        <circle cx="10.500" cy="10.500" r="10" fill="#2484dc" stroke="#6cb6f2" />
        <circle cx="10.500" cy="10.500" r="5.500" />
        <path d="M10.500 2.500v16M2.500 10.500h16M5 5l11 11M16 5L5 16" strokeWidth="1.200" />
        <circle cx="10.500" cy="10.500" r="1.500" fill="#fff" />
      </svg>
    ),
  },
  {
    name: 'Excel',
    active: true,
    icon: (
      <svg width="21" height="20" viewBox="0 0 21 20">
        <path d="M11 2.500h9v15h-9z" fill="#fff" stroke="#217346" />
        <path d="M12 5.500h7M12 8.500h7M12 11.500h7M12 14.500h7M15.500 3v14" stroke="#217346" />
        <path d="M0 2l12-2v20L0 18z" fill="#1c7a45" />
        <path d="M3.500 6.500l5 7M8.500 6.500l-5 7" stroke="#fff" strokeWidth="1.700" />
      </svg>
    ),
  },
  {
    name: 'Word',
    open: true,
    icon: (
      <svg width="21" height="20" viewBox="0 0 21 20">
        <path d="M11 2.500h9v15h-9z" fill="#fff" stroke="#2b579a" />
        <path d="M12 5.500h6M12 8.500h6M12 11.500h6M12 14.500h6" stroke="#2b579a" />
        <path d="M0 2l12-2v20L0 18z" fill="#2b579a" />
        <path d="M2.500 7L4 13l2-5.500L8 13l1.500-6" fill="none" stroke="#fff" strokeWidth="1.400" />
      </svg>
    ),
  },
  {
    name: 'Acrobat',
    open: true,
    icon: (
      <svg width="20" height="20" viewBox="0 0 20 20">
        <path d="M0 0h20v20H0z" fill="#eee" />
        <path d="M0 0h20v1.500H0z" fill="#c22c2c" />
        <path d="M3 16c3-1 7-6 7-10 0-2-2-1-1 1 1 3 4 6 8 6-4-1-9 0-12 2" fill="none" stroke="#c22c2c" strokeWidth="1.300" />
      </svg>
    ),
  },
  {
    name: 'Screen Recorder',
    open: true,
    icon: (
      <svg width="23" height="21" viewBox="0 0 23 21">
        <path d="M0 3l2-3h12l2 3v3l6-3v11l-6-3v4H0z" fill="#36aebf" />
        <circle cx="8" cy="8" r="5" fill="#fff" /><circle cx="8" cy="8" r="3" fill="#d9342f" />
        <path d="M9 15v3M4 20c3-3 7-3 10 0" fill="none" stroke="#36aebf" strokeWidth="1.500" />
      </svg>
    ),
  },
];

function Taskbar() {
  return (
    <div className="flex h-[38px] shrink-0 items-stretch bg-[#1b1b1b] text-white">
      <button aria-label="Start" className="flex w-[45px] items-center justify-center">
        <svg width="16" height="16" viewBox="0 0 16 16" fill="#fff"><path d="M0 2.200L7 1.200v6.300H0zM8 1l8-1v7.500H8zM0 8.500h7v6.300l-7-1zM8 8.500h8V16l-8-1z" /></svg>
      </button>
      <label className="flex w-[322px] items-center gap-[11px] border-y border-[#ccc] bg-[#f2f2f2] pt-px pl-[11px]">
        <svg width="15" height="16" viewBox="0 0 15 16" fill="none" stroke="#222" strokeWidth="1.300"><circle cx="9.500" cy="5.500" r="4.700" /><path d="M6.200 9L.5 15.300" /></svg>
        <input type="search" aria-label="Search" placeholder="Type here to search" className="min-w-0 flex-1 bg-transparent text-[13px] outline-none placeholder:text-[#444]" />
      </label>
      {apps.map((a) => (
        <button key={a.name} aria-label={a.name} className={`flex w-[46px] flex-col items-center justify-between pt-[9px] ${a.active ? 'bg-[#454545]' : ''}`}>
          <span className="flex h-[21px] items-center">{a.icon}</span>
          {a.open && <span className="h-[2px] w-[38px] bg-[#d8ec8e]" />}
        </button>
      ))}
      <div className="ml-auto flex items-center text-[11px]">
        <button aria-label="Show hidden icons" className="flex w-[23px] justify-center">
          <svg width="12" height="7" viewBox="0 0 12 7" fill="none" stroke="#fff" strokeWidth="1.400"><path d="M1 6l5-5 5 5" /></svg>
        </button>
        <button aria-label="Battery" className="flex w-[23px] justify-center">
          <svg width="15" height="11" viewBox="0 0 15 11" fill="none" stroke="#fff"><path d="M4.500 2.500h9v7h-9zM14.500 4.500v3M0 1.500h4M1 0v3M3 4v3H0" /><path d="M6 4h6v4H6z" fill="#fff" stroke="none" /></svg>
        </button>
        <button aria-label="Volume" className="flex w-[23px] justify-center">
          <svg width="16" height="14" viewBox="0 0 16 14" fill="none" stroke="#fff"><path d="M.5 5h2.500l4-4v12L3 9H.5zM9 4.500c1 1.500 1 3.500 0 5M11 2.500c2 3 2 6 0 9M13 1c3 4 3 8 0 12" /></svg>
        </button>
        <button aria-label="Network" className="flex w-[23px] justify-center">
          <svg width="15" height="13" viewBox="0 0 15 13" fill="none" stroke="#fff"><path d="M6 1.500h8.500v7H4.500V6M9.500 9v3M6 12.500h7M.5.500h4v4h-4zM2.500 4v6" /></svg>
        </button>
        <button aria-label="Dropbox" className="flex w-[23px] justify-center">
          <svg width="14" height="13" viewBox="0 0 14 13" fill="#aaa"><path d="M3.500 0L7 2.200 3.500 4.400 0 2.200zM10.500 0L14 2.200l-3.500 2.200L7 2.200zM3.500 4.600L7 6.800 3.500 9 0 6.800zM10.500 4.600L14 6.800 10.500 9 7 6.800zM7 8.200l3.500 2.200L7 12.600l-3.500-2.200z" /></svg>
        </button>
        <button className="w-[30px] text-center">ENG</button>
        <button className="w-[70px] text-center leading-[17px] whitespace-nowrap">
          14:24
          <br />
          15-09-2020
        </button>
        <button aria-label="Notifications" className="mr-[23px] ml-[9px]">
          <svg width="16" height="15" viewBox="0 0 16 15"><path d="M0 0h16v11h-5l-3 4v-4H0z" fill="#fff" /><path d="M3 3.500h10M3 5.500h10M3 7.500h6" stroke="#222" /></svg>
        </button>
      </div>
    </div>
  );
}

function Recorder() {
  return (
    <div className="absolute bottom-[66px] left-[452px] flex h-[46px] w-[331px] items-center rounded-[5px] border border-[#bbb] bg-white shadow-[0_1px_5px_rgba(0,0,0,0.4)]">
      <span className="ml-[7px] flex w-[5px] flex-col gap-[2px]">
        <i className="h-px bg-[#ddd]" /><i className="h-px bg-[#ddd]" /><i className="h-px bg-[#ddd]" /><i className="h-px bg-[#ddd]" /><i className="h-px bg-[#ddd]" />
      </span>
      <button aria-label="Pause" className="ml-[19px] flex gap-[6px]">
        <span className="h-4 w-[3px] bg-black" /><span className="h-4 w-[3px] bg-black" />
      </button>
      <button aria-label="Stop" className="ml-[17px] size-[17px] rounded-[1px] bg-[#dc3a3c]" />
      <Divider className="ml-[17px] h-[30px]" />
      <time className="w-[143px] text-center font-['Liberation_Sans',sans-serif] text-[22px] text-[#3aabb7]">00:11:00</time>
      <Divider className="h-[30px]" />
      <button aria-label="Draw" className="ml-[20px]">
        <svg width="18" height="18" viewBox="0 0 18 18" fill="none" stroke="#111" strokeWidth="1.700" strokeLinejoin="round">
          <path d="M7 9.500L14.500 1.500c1.500-1 3 .5 2 2L9 11.500z" fill="#bfe6ea" />
          <path d="M5.500 10.500c2-.5 4 1.500 3.500 3.500-1 2.500-4 3-8 2.500 2-1 .5-5 4.500-6z" fill="#fff" />
        </svg>
      </button>
      <button aria-label="Minimize recorder" className="mr-[10px] mb-[15px] ml-auto h-[2px] w-[10px] bg-[#666]" />
    </div>
  );
}

export default function App() {
  return (
    <div className="relative flex h-screen flex-col overflow-hidden bg-[#e6e6e6] font-['Open_Sans',sans-serif] text-[11px] text-[#444]">
      <TitleBar />
      <Ribbon />
      <QuickAccess />
      <FormulaBar />
      <Sheet />
      <SheetTabs />
      <StatusBar />
      <Taskbar />
      <Recorder />
    </div>
  );
}
